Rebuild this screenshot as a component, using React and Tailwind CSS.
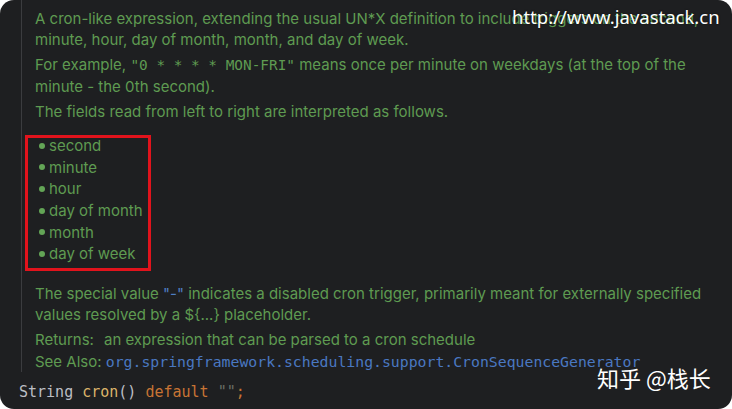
import React from "react";

const items = ["second", "minute", "hour", "day of month", "month", "day of week"];

const mono = { fontFamily: "'DejaVu Sans Mono', 'Liberation Mono', monospace" };

const App = () => {
  return (
    <div className="w-[732px] h-[409px] bg-white overflow-hidden">
      <div
        className="relative w-full h-full bg-[#1e1f21] rounded-[14px] overflow-hidden"
        style={{ fontFamily: "Inter, 'Noto Sans', sans-serif" }}
      >
        {/* Doc block */}
        <div className="ml-[21px] border-l border-[#3b3c3f] pl-[13px] pt-[8px] h-[372px] text-[15px] leading-[21px] text-[#5e9b51]">
          <p className="mb-[4px] pr-[12px]">
            A cron-like expression, extending the usual UN*X definition to include triggers on the second,
            minute, hour, day of month, month, and day of week.
          </p>
          <p className="mb-[4px] pr-[12px]">
            For example, <span className="text-[14.4px]" style={mono}>"0 * * * * MON-FRI"</span> means once per
            minute on weekdays (at the top of the minute - the 0th second).
          </p>
          <p className="mb-[2px]">The fields read from left to right are interpreted as follows.</p>

          {/* Annotated list */}
          <div className="w-[126px] h-[136px] -ml-[10px] mt-[13px] border-[3px] border-[#e1131c]">
            <div className="-mt-[3px]">
              {items.map((it) => (
                <div key={it} className="flex items-center h-[21.6px] pl-[11px]">
                  <span className="w-[6px] h-[6px] rounded-full bg-[#63a556] mr-[4px]" />
                  <span>{it}</span>
                </div>
              ))}
            </div>
          </div>

          <p className="mt-[12px] mb-[4px] pr-[12px]">
            The special value <span className="text-[#4f7ec4]">"-"</span> indicates a disabled cron trigger,
            primarily meant for externally specified values resolved by a {"${...}"} placeholder.
          </p>
          <p className="mb-[1px]">
            Returns:<span className="ml-[10px]">an expression that can be parsed to a cron schedule</span>
          </p>
          <p>
            See Also:{" "}
            <span className="text-[14.8px] text-[#4a78c2]" style={mono}>
              org.springframework.scheduling.support.CronSequenceGenerator
            </span>
          </p>
        </div>

        {/* Declaration */}
        <div className="pl-[19px] pt-[10px] text-[15px] leading-[20px] text-[#bcbec4]" style={mono}>
          String <span className="text-[#dbb46a]">cron</span>(){" "}
          <span className="text-[#c87434]">default</span> <span className="text-[#6b6e66]">""</span>
          <span className="text-[#c87434]">;</span>
        </div>

        {/* Watermarks */}
        <div
          className="absolute left-[512px] top-[3px] text-[18.5px] text-white"
          style={{ textShadow: "0 0 2px rgba(0,0,0,0.6)", fontFamily: "'Noto Sans', sans-serif" }}
        >
          http://www.javastack.cn
        </div>
        <div
          className="absolute left-[597px] top-[361px] text-[22px] text-white"
          style={{ fontFamily: "'Noto Sans CJK SC', 'Noto Sans', sans-serif" }}
        >
          知乎 @栈长
        </div>
      </div>
    </div>
  );
};

export default App;
